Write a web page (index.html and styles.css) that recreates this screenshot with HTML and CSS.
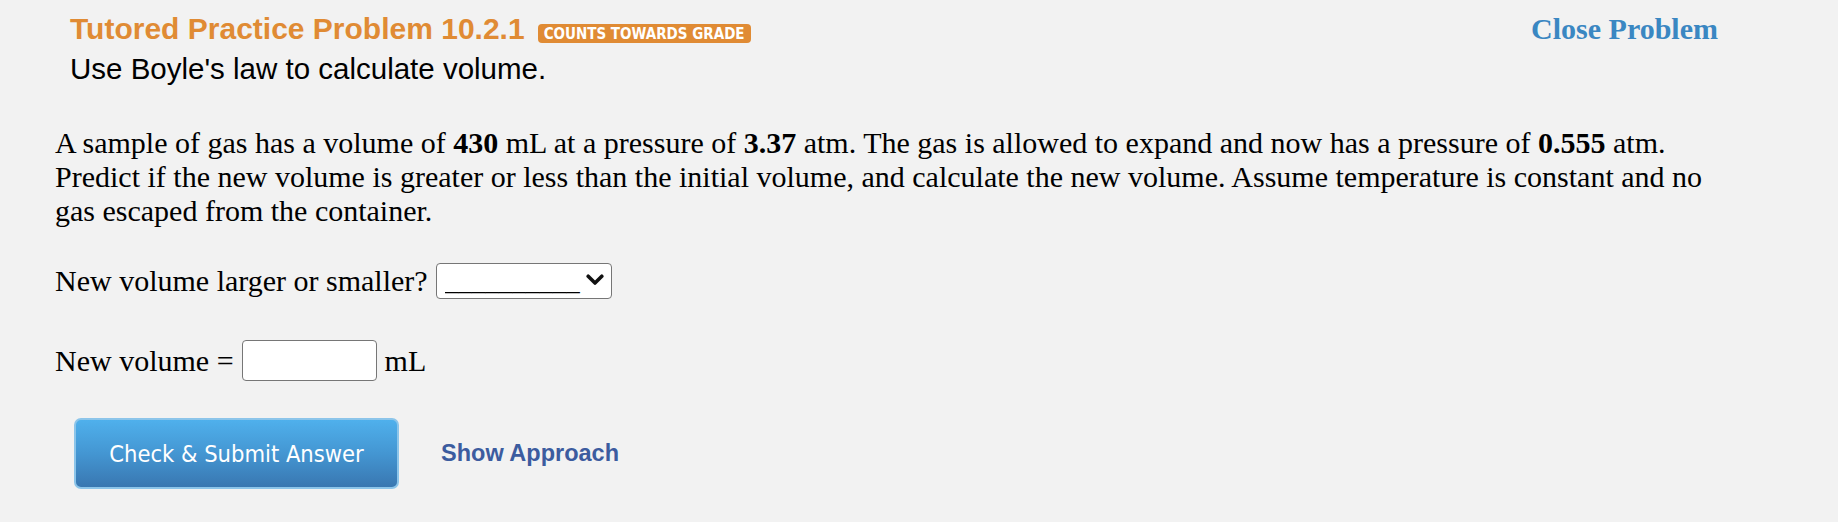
FILE: index.html
```html
<!DOCTYPE html>
<html lang="en">
<head>
<meta charset="utf-8">
<title>Tutored Practice Problem 10.2.1</title>
<link rel="stylesheet" href="styles.css">
</head>
<body>
<div class="page">
  <header class="problem-head">
    <div class="head-text">
      <h1 class="title">Tutored Practice Problem 10.2.1 <span class="badge">COUNTS TOWARDS GRADE</span></h1>
      <h2 class="subtitle">Use Boyle's law to calculate volume.</h2>
    </div>
    <a class="close-link" href="#">Close Problem</a>
  </header>

  <p class="statement">A sample of gas has a volume of <b>430</b> mL at a pressure of <b>3.37</b> atm. The gas is allowed to expand and now has a pressure of <b>0.555</b> atm. Predict if the new volume is greater or less than the initial volume, and calculate the new volume. Assume temperature is constant and no gas escaped from the container.</p>

  <div class="field">
    <label for="dir">New volume larger or smaller?</label>
    <span class="select-wrap">
      <select id="dir" class="select">
        <option>__________</option>
        <option>larger</option>
        <option>smaller</option>
      </select>
      <svg class="chevron" width="18" height="12" viewBox="0 0 18 12" aria-hidden="true"><path d="M2.2 2.2 L9 9 L15.8 2.2" fill="none" stroke="#111" stroke-width="3.6" stroke-linecap="round" stroke-linejoin="round"/></svg>
    </span>
  </div>

  <div class="field">
    <label for="vol">New volume =</label>
    <input id="vol" class="text-input" type="text">
    <span class="unit">mL</span>
  </div>

  <div class="actions">
    <button class="submit" type="button">Check &amp; Submit Answer</button>
    <a class="approach" href="#">Show Approach</a>
  </div>
</div>
</body>
</html>
```

FILE: styles.css
```css
html, body {
  margin: 0;
  padding: 0;
  background: #f2f2f2;
}

.page {
  padding: 11px 120px 0 55px;
}

/* Header: title block on the left, close link on the right */
.problem-head {
  display: flex;
  justify-content: space-between;
  align-items: baseline;
  padding-left: 15px;
}

.title {
  display: flex;
  align-items: baseline;
  gap: 13px;
  margin: 0;
  font-family: "Liberation Sans", Arial, sans-serif;
  font-weight: bold;
  font-size: 30px;
  line-height: 36px;
  color: #e08b34;
}

.badge {
  display: inline-block;
  height: 19px;
  line-height: 20px;
  padding: 0 6px;
  border-radius: 4px;
  background: #e08b34;
  color: #fff;
  font-family: "DejaVu Sans Condensed", "DejaVu Sans", sans-serif;
  font-stretch: condensed;
  font-weight: bold;
  font-size: 15px;
}

.subtitle {
  margin: 4px 0 0;
  font-family: "Liberation Sans", Arial, sans-serif;
  font-weight: normal;
  font-size: 29.5px;
  line-height: 36px;
  color: #000;
}

.close-link {
  font-family: "Liberation Serif", "Times New Roman", serif;
  font-weight: bold;
  font-size: 30px;
  line-height: 36px;
  color: #3a87c2;
  text-decoration: none;
}

/* Problem statement */
.statement {
  max-width: 1680px;
  margin: 39px 0 0;
  font-family: "Liberation Serif", "Times New Roman", serif;
  font-size: 30px;
  line-height: 34px;
  color: #000;
}

.field {
  display: flex;
  align-items: center;
  gap: 8px;
  font-family: "Liberation Serif", "Times New Roman", serif;
  font-size: 30px;
  color: #000;
}

.field:nth-of-type(1) {
  margin-top: 35px;
}

.field + .field {
  margin-top: 41px;
}

.select-wrap {
  position: relative;
  display: inline-block;
}

.select {
  appearance: none;
  -webkit-appearance: none;
  width: 176px;
  height: 36px;
  margin: 0;
  padding: 0 0 0 8px;
  border: 1px solid #767676;
  border-radius: 4px;
  background: #fff;
  font-family: "Liberation Serif", "Times New Roman", serif;
  font-size: 27px;
  color: #000;
}

.chevron {
  position: absolute;
  right: 8px;
  top: 11px;
  pointer-events: none;
}

.text-input {
  width: 135px;
  height: 41px;
  box-sizing: border-box;
  margin: 0;
  padding: 0 6px;
  border: 1px solid #767676;
  border-radius: 4px;
  background: #fff;
  font-family: "Liberation Serif", "Times New Roman", serif;
  font-size: 24px;
}

/* Submit button and approach link */
.actions {
  display: flex;
  align-items: center;
  gap: 42px;
  margin-top: 37px;
  padding-left: 19px;
}

.submit {
  width: 325px;
  height: 71px;
  box-sizing: border-box;
  border: 2px solid #8cc5ea;
  border-radius: 7px;
  background: linear-gradient(to bottom, #4fb0ec 0%, #4496d2 50%, #3977b1 100%);
  color: #fff;
  font-family: "DejaVu Sans Condensed", "DejaVu Sans", sans-serif;
  font-stretch: condensed;
  font-size: 23.5px;
  cursor: pointer;
}

.approach {
  font-family: "Liberation Sans", Arial, sans-serif;
  font-weight: bold;
  font-size: 23.5px;
  color: #3c5c9f;
  text-decoration: none;
}
```
